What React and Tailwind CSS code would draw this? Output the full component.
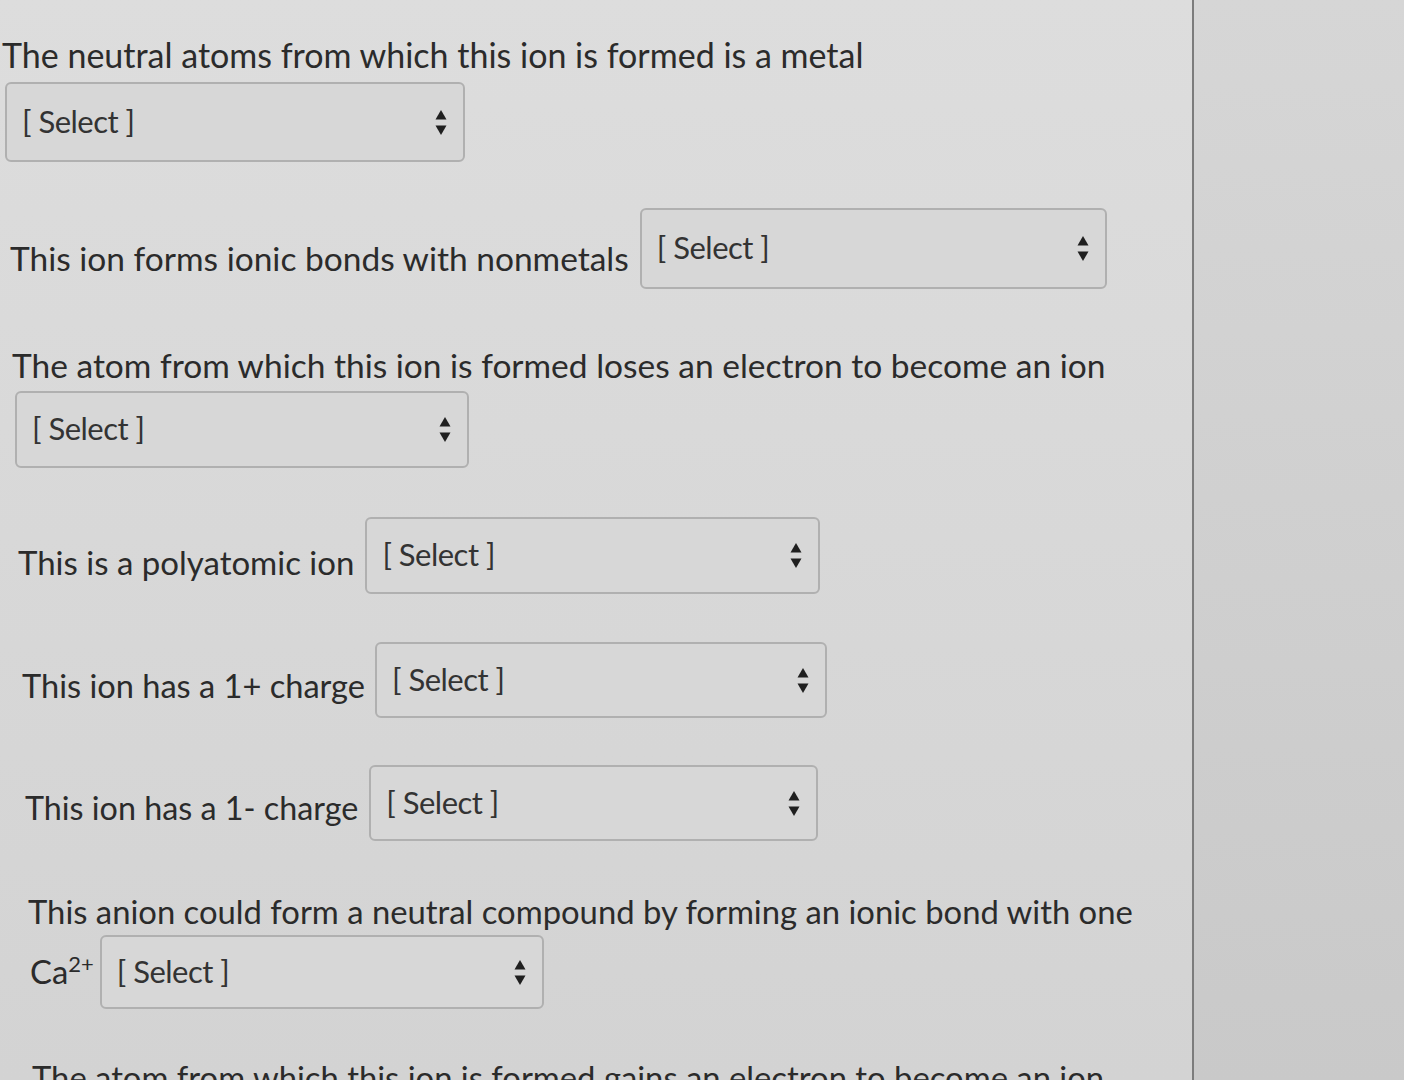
const Arrows = () => (
  <svg width="12" height="27" viewBox="0 0 12 27" className="shrink-0">
    <path d="M6 1 L11.5 10.5 L0.5 10.5 Z" fill="#1f1f1f" />
    <path d="M6 26 L11.5 16.5 L0.5 16.5 Z" fill="#1f1f1f" />
  </svg>
);

const Select = ({ className }) => (
  <div
    className={`flex shrink-0 items-center justify-between rounded-[6px] border-2 border-[#b0b0b0] bg-[#d7d7d7] pl-[15px] pr-[16px] ${className}`}
  >
    <span className="text-[31px] leading-none tracking-[-0.5px] text-[#333] -mt-[2px]">
      [ Select ]
    </span>
    <Arrows />
  </div>
);

const App = () => {
  return (
    <div
      className="flex h-[1080px] w-[1404px] overflow-hidden bg-[#dadada] text-[#2b2b2b]"
      style={{ fontFamily: "Lato, 'Open Sans', sans-serif" }}
    >
      <div className="w-[1194px] shrink-0 border-r-2 border-[#7c7c7c] bg-gradient-to-b from-[#dddddd] to-[#d3d3d3] pt-[35px] text-[33.5px] leading-[40px]">
        <p className="pl-[2px] text-[34px]">The neutral atoms from which this ion is formed is a metal</p>
        <Select className="ml-[5px] mt-[7px] h-[80px] w-[460px]" />

        <div className="mt-[46px] flex items-start pl-[10px]">
          <span className="mt-[30px]">This ion forms ionic bonds with nonmetals</span>
          <Select className="ml-[11px] h-[81px] w-[467px]" />
        </div>

        <p className="mt-[56px] pl-[12px]">
          The atom from which this ion is formed loses an electron to become an ion
        </p>
        <Select className="ml-[15px] mt-[6px] h-[77px] w-[454px]" />

        <div className="mt-[49px] flex items-start pl-[18px]">
          <span className="mt-[25px] text-[33px]">This is a polyatomic ion</span>
          <Select className="ml-[11px] h-[77px] w-[455px]" />
        </div>

        <div className="mt-[48px] flex items-start pl-[22px]">
          <span className="mt-[24px] text-[32.6px]">This ion has a 1+ charge</span>
          <Select className="ml-[10px] h-[76px] w-[452px]" />
        </div>

        <div className="mt-[47px] flex items-start pl-[25px]">
          <span className="mt-[23px] text-[32.3px]">This ion has a 1- charge</span>
          <Select className="ml-[11px] h-[76px] w-[449px]" />
        </div>

        <p className="mt-[51px] pl-[28px] text-[32.8px]">
          This anion could form a neutral compound by forming an ionic bond with one
        </p>
        <div className="mt-[3px] flex items-start pl-[30px]">
          <span className="mt-[17px] text-[32.8px]">
            Ca<sup className="top-[-0.55em] text-[22px]">2+</sup>
          </span>
          <Select className="ml-[6px] h-[74px] w-[444px]" />
        </div>

        <p className="mt-[49px] whitespace-nowrap pl-[32px] text-[32.8px]">
          The atom from which this ion is formed gains an electron to become an ion
        </p>
      </div>
      <div className="flex-1 bg-gradient-to-b from-[#d6d6d6] to-[#c9c9c9]" />
    </div>
  );
};

export default App;
